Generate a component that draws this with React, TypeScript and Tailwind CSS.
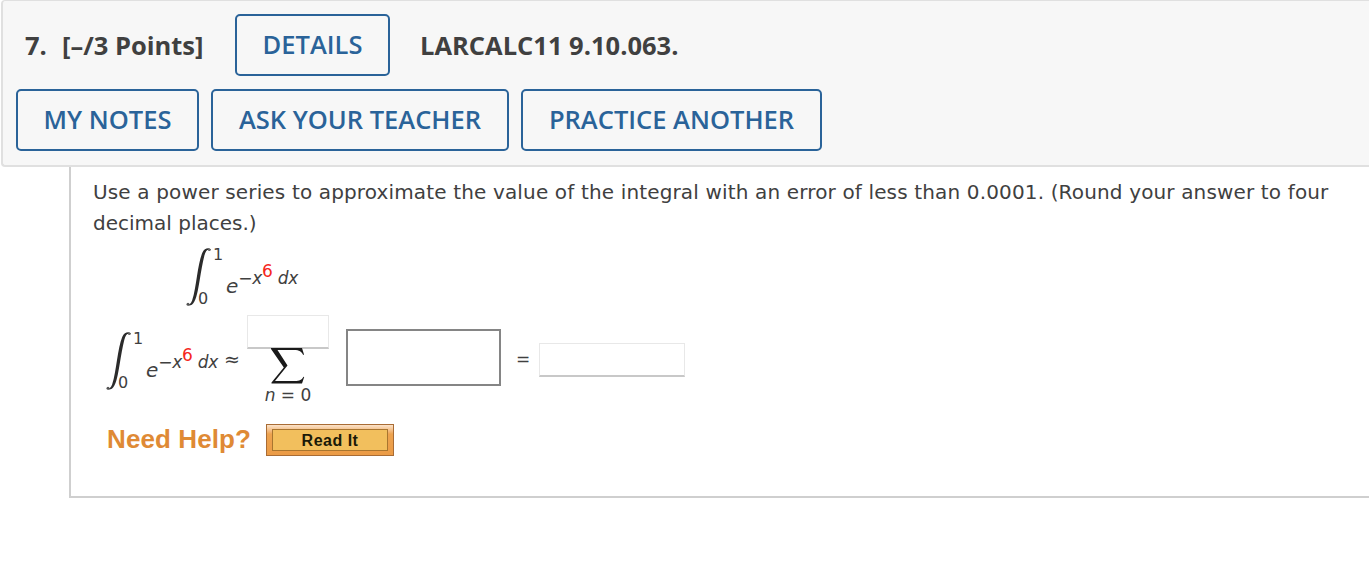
import type { ReactNode } from "react";

function OutlineButton({ children, className }: { children: ReactNode; className: string }) {
  return (
    <button
      type="button"
      className={`h-[62px] shrink-0 rounded-[5px] border-2 border-[#2a6399] text-[25.5px] font-semibold leading-none text-[#2a6399] whitespace-nowrap ${className}`}
    >
      {children}
    </button>
  );
}

// definite integral of e^(-x^6) from 0 to 1
function Integral() {
  return (
    <div className="flex h-[62px] items-start italic leading-none">
      <svg width="26" height="60" viewBox="0 0 26 60" className="shrink-0">
        <path
          d="M24.5 3.2C22 1.8 19.8 3 18.4 8.5C16.5 16 15.2 24 13.7 33C12 43 10.6 52 7.3 56.3C5.4 58.8 2.6 59 1 57.6C3.3 57.8 4.8 57 6.1 53.5C8.5 46.5 9.6 37.5 11 29C12.5 19.5 14 11.5 16.2 6C18.3 0.9 22.8 0.3 24.8 2.2Z"
          fill="#2b2b2b"
        />
        <circle cx="23.3" cy="2.9" r="1.2" fill="#666" />
        <circle cx="2" cy="57.2" r="1.5" fill="#555" />
      </svg>
      <div className="-ml-[14px] w-[28px] text-[16px] not-italic">
        <div className="pl-[15px]">1</div>
        <div className="mt-[28px]">0</div>
      </div>
      <span className="mt-[29px] text-[20px]">e</span>
      <span className="mt-[23px] text-[17px] tracking-[-0.3px]">−x</span>
      <span className="mt-[16px] text-[17px] not-italic text-[#f5261c]">6</span>
      <span className="mt-[23px] ml-[5px] text-[17px] tracking-[-0.3px]">dx</span>
    </div>
  );
}

function AnswerInput({ className }: { className: string }) {
  return (
    <input
      type="text"
      className={`block h-[34px] shrink-0 border border-b-2 border-[#e8e8e8] border-b-[#c8c8c8] bg-white outline-none ${className}`}
    />
  );
}

function QuestionHeader() {
  return (
    <header className="h-[167px] rounded-l-[4px] border-2 border-r-0 border-t border-[#e0e0e0] bg-[#f7f7f7] pt-[13px] font-['Open_Sans',sans-serif] ml-px">
      <div className="flex items-center pl-[22px] text-[25.5px] font-bold text-[#404040] whitespace-pre">
        <span className="w-[37px] pt-px">7.</span>
        <span className="w-[173px] pt-px">[–/3 Points]</span>
        <OutlineButton className="w-[155px]">DETAILS</OutlineButton>
        <span className="ml-[30px] pt-px">LARCALC11 9.10.063.</span>
      </div>
      <div className="mt-[13px] flex gap-3 pl-[13px]">
        <OutlineButton className="w-[183px]">MY NOTES</OutlineButton>
        <OutlineButton className="w-[298px]">ASK YOUR TEACHER</OutlineButton>
        <OutlineButton className="w-[301px]">PRACTICE ANOTHER</OutlineButton>
      </div>
    </header>
  );
}

export default function App() {
  return (
    <div className="h-[576px] w-[1369px] overflow-hidden bg-white">
      <QuestionHeader />
      <main className="ml-[69px] h-[331px] border-b-2 border-l-2 border-[#cfcfcf] font-['DejaVu_Sans',sans-serif] text-[#404040]">
        <p className="pl-[22px] pt-[10px] text-[20px] leading-[31px] whitespace-nowrap">
          <span className="tracking-[0.147px]">
            Use a power series to approximate the value of the integral with an error of less than 0.0001. (Round your answer to four
          </span>
          <br />
          decimal places.)
        </p>
        <div className="ml-[115px] mt-[8px]">
          <Integral />
        </div>
        <div className="ml-[35px] mt-[6px] flex h-[94px] items-start">
          <div className="mt-[16px] w-[118px]">
            <Integral />
          </div>
          <span className="mt-[35px] w-[23px] text-[19px] leading-none">≈</span>
          <div className="flex w-[82px] shrink-0 flex-col items-center">
            <AnswerInput className="w-[82px]" />
            <svg width="34" height="36" viewBox="0 0 34 36" className="-mt-px">
              <path
                d="M0 0H31L33 6.5L32.2 7C30.5 3.5 28.5 2 23 2H6.5L16.5 17.5L4 33H24C28.5 33 30.8 32 32.5 28.8L33.2 29L31 35.5H0.5V34.5L12.8 19.5L0 1Z"
                fill="#1a1a1a"
              />
            </svg>
            <span className="mt-[3px] text-[17px] leading-none whitespace-nowrap">
              <i>n</i> = 0
            </span>
          </div>
          <div className="ml-[17px] mt-[14px] h-[57px] w-[155px] shrink-0 border-2 border-[#858585]" />
          <span className="ml-[15px] mt-[36px] w-[23px] text-[17px] leading-none">=</span>
          <AnswerInput className="mt-[28px] w-[146px]" />
        </div>
        <div className="ml-[36px] mt-[15px] flex items-center font-['Liberation_Sans',Arial,sans-serif] font-bold">
          <span className="w-[159px] pb-[2px] text-[26px] leading-none tracking-[0.1px] text-[#df8a35] whitespace-nowrap">Need Help?</span>
          <button
            type="button"
            className="h-[32px] w-[128px] border border-[#a96c35] bg-linear-to-b from-[#fbe3ca] via-[#eda34f] via-30% to-[#eb9b46] px-[5px] py-[4px]"
          >
            <span className="flex h-full items-center justify-center border border-[#a8752f] bg-[#f2bf5d] pt-px text-[16px] leading-none tracking-[0.5px] text-[#1c1a08]">
              Read It
            </span>
          </button>
        </div>
      </main>
    </div>
  );
}
